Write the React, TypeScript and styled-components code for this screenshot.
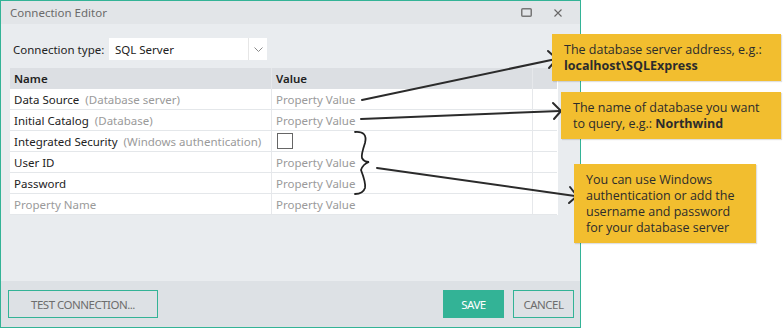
import React from 'react';
import styled, { createGlobalStyle } from 'styled-components';

const TEAL = '#33b396';
const YELLOW = '#f2be2f';
const UI_FONT = `"Noto Sans", "Open Sans", sans-serif`;

const GlobalStyle = createGlobalStyle`
  html, body {
    margin: 0;
    padding: 0;
    background: #ffffff;
  }
  body {
    font-family: ${UI_FONT};
  }
`;

interface Property {
  name: string;
  hint?: string;
  value?: string;
  checkbox?: boolean;
  placeholder?: boolean;
}

const PROPERTIES: Property[] = [
  { name: 'Data Source', hint: '(Database server)', value: 'Property Value' },
  { name: 'Initial Catalog', hint: '(Database)', value: 'Property Value' },
  { name: 'Integrated Security', hint: '(Windows authentication)', checkbox: true },
  { name: 'User ID', value: 'Property Value' },
  { name: 'Password', value: 'Property Value' },
  { name: 'Property Name', value: 'Property Value', placeholder: true },
];

const MaximizeIcon = () => (
  <svg width="11" height="9" viewBox="0 0 11 9">
    <rect x="0.75" y="0.75" width="9.5" height="7.5" rx="1" fill="none" stroke="#777" strokeWidth="1.5" />
  </svg>
);

const CloseIcon = () => (
  <svg width="8" height="8" viewBox="0 0 8 8">
    <path d="M0.5 0.5 L7.5 7.5 M7.5 0.5 L0.5 7.5" stroke="#666" strokeWidth="1.1" />
  </svg>
);

const ChevronDown = () => (
  <svg width="9" height="5" viewBox="0 0 9 5">
    <path d="M0.5 0.5 L4.5 4.5 L8.5 0.5" fill="none" stroke="#8a8a8a" strokeWidth="1" />
  </svg>
);

const Annotations = () => (
  <Overlay width="783" height="328" viewBox="0 0 783 328">
    <g fill="none" stroke="#2b2b2b" strokeWidth="2" strokeLinecap="round" strokeLinejoin="round">
      <path d="M362 100 L556 59" />
      <path d="M548 51 L557 59 L549 68" />
      <path d="M361 119 L560 111" />
      <path d="M553 103 L561 111 L554 119" />
      <path d="M377 168 L575 196" />
      <path d="M570 187 L577 196 L569 203" />
    </g>
    <path
      d="M355 132 Q368 131 365 143 Q361 155 362 158 Q364 162 369 162 Q363 164 361 170 Q366 183 365 188 Q363 194 355 194"
      fill="none"
      stroke="#222"
      strokeWidth="1.8"
      strokeLinecap="round"
    />
  </Overlay>
);

export default function App() {
  return (
    <>
      <GlobalStyle />
      <Page>
        <Window>
          <TitleBar>
            <Title>Connection Editor</Title>
            <TitleButtons>
              <TitleButton><MaximizeIcon /></TitleButton>
              <TitleButton><CloseIcon /></TitleButton>
            </TitleButtons>
          </TitleBar>

          <Body>
            <TypeRow>
              <TypeLabel>Connection type:</TypeLabel>
              <Select>
                <SelectValue>SQL Server</SelectValue>
                <SelectArrow><ChevronDown /></SelectArrow>
              </Select>
            </TypeRow>

            <Grid>
              <HeaderCell>Name</HeaderCell>
              <HeaderCell>Value</HeaderCell>
              <HeaderCell />
              {PROPERTIES.map(p => (
                <React.Fragment key={p.name}>
                  <NameCell $placeholder={p.placeholder}>
                    {p.name}
                    {p.hint && <Hint>{p.hint}</Hint>}
                  </NameCell>
                  <ValueCell>
                    {p.checkbox ? <Checkbox /> : p.value}
                  </ValueCell>
                  <EmptyCell />
                </React.Fragment>
              ))}
            </Grid>
          </Body>

          <Footer>
            <OutlineButton $width={150}>TEST CONNECTION...</OutlineButton>
            <FooterRight>
              <PrimaryButton>SAVE</PrimaryButton>
              <OutlineButton $width={61}>CANCEL</OutlineButton>
            </FooterRight>
          </Footer>
        </Window>

        <Annotations />

        <Callout $left={552} $top={34} $width={229}>
          The database server address, e.g.:<br />
          <b>localhost\SQLExpress</b>
        </Callout>
        <Callout $left={561} $top={92} $width={220}>
          The name of database you want<br />
          to query, e.g.: <b>Northwind</b>
        </Callout>
        <Callout $left={574} $top={164} $width={182} $padTop={8}>
          You can use Windows<br />
          authentication or add the<br />
          username and password<br />
          for your database server
        </Callout>
      </Page>
    </>
  );
}

const Page = styled.div`
  position: relative;
  width: 783px;
  height: 328px;
  overflow: hidden;
`;

const Window = styled.div`
  width: 581px;
  height: 328px;
  box-sizing: border-box;
  border: 1px solid ${TEAL};
  display: flex;
  flex-direction: column;
  background: #e9ecef;
`;

const TitleBar = styled.div`
  height: 23px;
  flex: none;
  display: flex;
  align-items: center;
  justify-content: space-between;
  padding-left: 9px;
  background: #e2e5e8;
`;

const Title = styled.div`
  font-size: 11.5px;
  color: #6a6a6a;
`;

const TitleButtons = styled.div`
  display: flex;
  align-items: center;
  gap: 18px;
  padding-right: 15px;
`;

const TitleButton = styled.div`
  display: flex;
  align-items: center;
  justify-content: center;
  width: 14px;
  height: 14px;
`;

const Body = styled.div`
  flex: 1;
  padding: 14px 22px 0 9px;
  display: flex;
  flex-direction: column;
`;

const TypeRow = styled.div`
  display: flex;
  align-items: center;
  height: 22px;
  margin-bottom: 8px;
`;

const TypeLabel = styled.div`
  font-size: 11.5px;
  color: #222;
  padding-left: 3px;
  width: 96px;
`;

const Select = styled.div`
  width: 158px;
  height: 22px;
  background: #ffffff;
  display: flex;
  align-items: center;
`;

const SelectValue = styled.div`
  flex: 1;
  font-size: 11.5px;
  color: #222;
  padding-left: 6px;
`;

const SelectArrow = styled.div`
  width: 18px;
  height: 100%;
  border-left: 1px solid #e6e6e6;
  display: flex;
  align-items: center;
  justify-content: center;
`;

const Grid = styled.div`
  display: grid;
  grid-template-columns: 261px 261px 25px;
  grid-auto-rows: 21px;
  background: #ffffff;
`;

const Cell = styled.div`
  display: flex;
  align-items: center;
  font-size: 11.5px;
  padding-left: 4px;
  border-bottom: 1px solid #e4e7ea;
  box-sizing: border-box;
  white-space: nowrap;
`;

const HeaderCell = styled(Cell)`
  background: #dcdfe3;
  color: #222;
  font-weight: 600;
  border-bottom: none;
  & + & {
    border-left: 1px solid #e6e8eb;
  }
`;

const NameCell = styled(Cell)<{ $placeholder?: boolean }>`
  color: ${p => (p.$placeholder ? '#9a9a9a' : '#222')};
`;

const Hint = styled.span`
  color: #9a9a9a;
  margin-left: 6px;
`;

const ValueCell = styled(Cell)`
  color: #9a9a9a;
  border-left: 1px solid #e6e8eb;
`;

const EmptyCell = styled(Cell)`
  border-left: 1px solid #e6e8eb;
`;

const Checkbox = styled.div`
  width: 14px;
  height: 14px;
  border: 1px solid #666;
  margin-left: 1px;
  background: #fff;
`;

const Footer = styled.div`
  height: 46px;
  flex: none;
  background: #dde1e5;
  display: flex;
  align-items: center;
  justify-content: space-between;
  padding: 0 6px 0 7px;
  box-sizing: border-box;
`;

const FooterRight = styled.div`
  display: flex;
  gap: 9px;
`;

const ButtonBase = styled.button`
  height: 28px;
  box-sizing: border-box;
  font-family: ${UI_FONT};
  font-size: 11.5px;
  letter-spacing: -0.5px;
  padding: 0 4px;
  cursor: pointer;
`;

const OutlineButton = styled(ButtonBase)<{ $width: number }>`
  width: ${p => p.$width}px;
  border: 1px solid ${TEAL};
  background: transparent;
  color: #6d6d6d;
`;

const PrimaryButton = styled(ButtonBase)`
  width: 61px;
  border: 1px solid ${TEAL};
  background: ${TEAL};
  color: #ffffff;
`;

const Overlay = styled.svg`
  position: absolute;
  left: 0;
  top: 0;
  pointer-events: none;
`;

const Callout = styled.div<{ $left: number; $top: number; $width: number; $padTop?: number }>`
  position: absolute;
  left: ${p => p.$left}px;
  top: ${p => p.$top}px;
  width: ${p => p.$width}px;
  box-sizing: border-box;
  padding: ${p => p.$padTop ?? 8}px 8px 7px 12px;
  background: ${YELLOW};
  color: #2c2c2c;
  font-family: "Open Sans", "Noto Sans", sans-serif;
  font-size: 12.5px;
  line-height: 16px;
  box-shadow: 1px 1px 1px rgba(0, 0, 0, 0.12);
  b {
    font-weight: 700;
  }
`;
